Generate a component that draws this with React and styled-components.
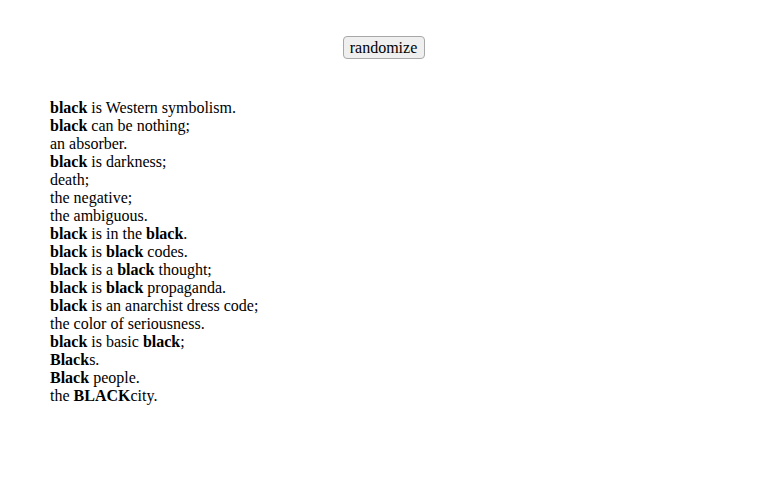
import React from "react";
import styled, { createGlobalStyle } from "styled-components";

const GlobalStyle = createGlobalStyle`
  body {
    margin: 0;
    background: white;
    font-family: "Liberation Serif", "Times New Roman", serif;
    font-size: 16px;
    color: black;
  }
`;

const Page = styled.div`
  display: flex;
  flex-direction: column;
  padding: 36px 50px 0;
`;

const Controls = styled.div`
  display: flex;
  justify-content: center;
`;

const RandomizeButton = styled.button`
  font-family: "Liberation Serif", "Times New Roman", serif;
  font-size: 16px;
  line-height: 18px;
  padding: 2px 7px 1px 6px;
  border: 1px solid #a8a8a8;
  border-radius: 4px;
  background: #efefef;
  color: black;
  cursor: pointer;
`;

const Poem = styled.div`
  margin-top: 40px;
  line-height: 18px;
`;

const Line = styled.div`
  white-space: nowrap;
`;

const B = styled.b`
  font-weight: bold;
`;

const lines = [
  [["b", "black"], " is Western symbolism."],
  [["b", "black"], " can be nothing;"],
  ["an absorber."],
  [["b", "black"], " is darkness;"],
  ["death;"],
  ["the negative;"],
  ["the ambiguous."],
  [["b", "black"], " is in the ", ["b", "black"], "."],
  [["b", "black"], " is ", ["b", "black"], " codes."],
  [["b", "black"], " is a ", ["b", "black"], " thought;"],
  [["b", "black"], " is ", ["b", "black"], " propaganda."],
  [["b", "black"], " is an anarchist dress code;"],
  ["the color of seriousness."],
  [["b", "black"], " is basic ", ["b", "black"], ";"],
  [["b", "Black"], "s."],
  [["b", "Black"], " people."],
  ["the ", ["b", "BLACK"], "city."],
];

const App = () => {
  return (
    <Page>
      <GlobalStyle />
      <Controls>
        <RandomizeButton>randomize</RandomizeButton>
      </Controls>
      <Poem>
        {lines.map((parts, i) => (
          <Line key={i}>
            {parts.map((p, j) =>
              Array.isArray(p) ? <B key={j}>{p[1]}</B> : <React.Fragment key={j}>{p}</React.Fragment>
            )}
          </Line>
        ))}
      </Poem>
    </Page>
  );
};

export default App;
